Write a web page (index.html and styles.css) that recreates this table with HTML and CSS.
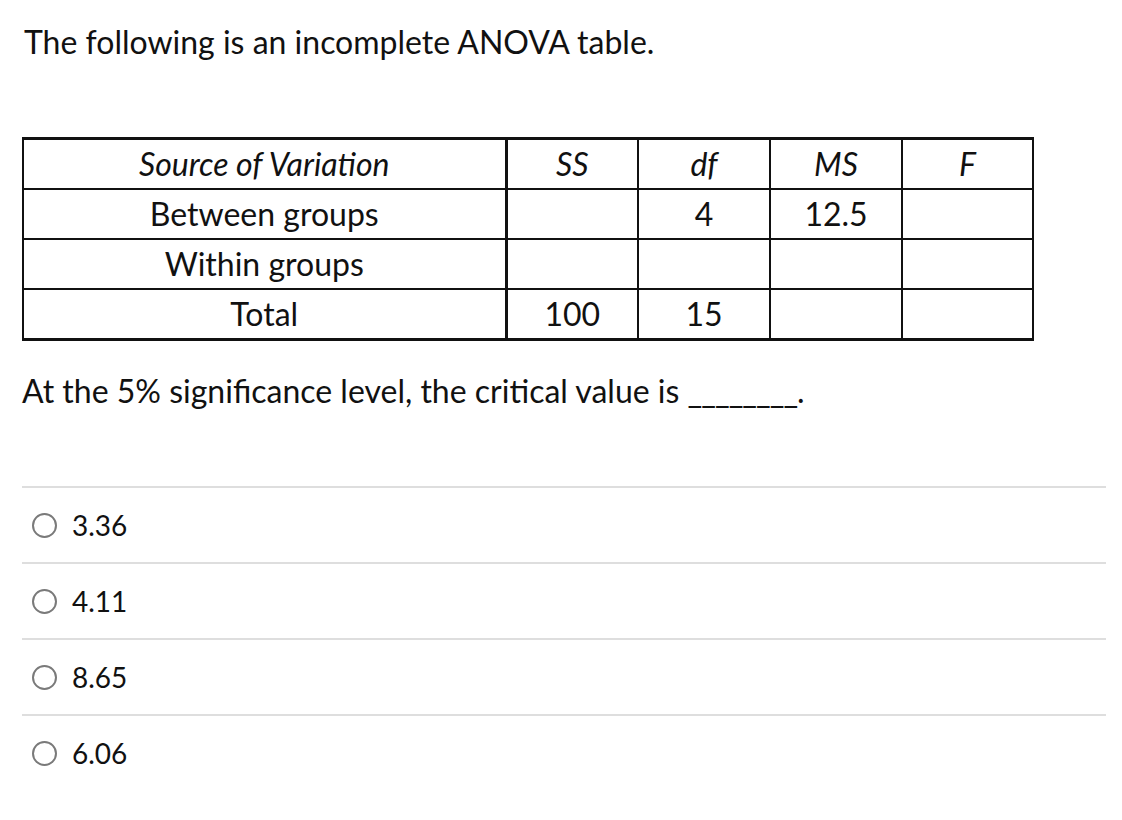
FILE: index.html
```html
<!DOCTYPE html>
<html>
<head>
<meta charset="utf-8">
<link rel="stylesheet" href="styles.css">
</head>
<body>
<div class="page">
  <p class="title">The following is an incomplete ANOVA table.</p>
  <table class="anova">
    <colgroup>
      <col class="c-src">
      <col class="c-num">
      <col class="c-num">
      <col class="c-num">
      <col class="c-last">
    </colgroup>
    <tr class="head">
      <td class="src"><i>Source of Variation</i></td>
      <td class="ss"><i>SS</i></td>
      <td><i>df</i></td>
      <td><i>MS</i></td>
      <td><i>F</i></td>
    </tr>
    <tr>
      <td class="src">Between groups</td>
      <td class="ss"></td>
      <td>4</td>
      <td>12.5</td>
      <td></td>
    </tr>
    <tr>
      <td class="src">Within groups</td>
      <td class="ss"></td>
      <td></td>
      <td></td>
      <td></td>
    </tr>
    <tr>
      <td class="src">Total</td>
      <td class="ss">100</td>
      <td>15</td>
      <td></td>
      <td></td>
    </tr>
  </table>
  <p class="question">At the 5% significance level, the critical value is <span class="blank">________</span>.</p>
  <div class="options">
    <div class="option"><span class="radio"></span><span class="label">3.36</span></div>
    <div class="option"><span class="radio"></span><span class="label">4.11</span></div>
    <div class="option"><span class="radio"></span><span class="label">8.65</span></div>
    <div class="option"><span class="radio"></span><span class="label">6.06</span></div>
  </div>
</div>
</body>
</html>
```

FILE: styles.css
```css
html, body {
  margin: 0;
  padding: 0;
  background: #fff;
}
body {
  font-family: Lato, "Liberation Sans", sans-serif;
  color: #111;
}
.page {
  padding: 20px 16px 0 22px;
}
.title {
  margin: 0 0 0 2px;
  font-size: 32px;
  line-height: 44px;
}
.anova {
  margin-top: 73px;
  border-collapse: collapse;
  table-layout: fixed;
  width: 1010px;
  border-top: 3px solid #111;
  border-bottom: 3px solid #111;
  border-left: 2px solid #111;
  border-right: 2px solid #111;
}
.c-src {
  width: 483px;
}
.c-num {
  width: 132px;
}
.c-last {
  width: 131px;
}
.anova td {
  border: 2px solid #111;
  text-align: center;
  font-size: 32px;
  height: 48px;
  padding: 0;
  line-height: 1;
}
.anova td.src {
  border-right: 3px solid #111;
}
.question {
  margin: 28px 0 0 0;
  font-size: 32px;
  line-height: 44px;
}
.blank {
  letter-spacing: -1px;
}
.options {
  margin-top: 73px;
  width: 1084px;
}
.option {
  display: flex;
  align-items: center;
  height: 74px;
  border-top: 2px solid #dedede;
}
.radio {
  width: 25px;
  height: 25px;
  border: 2px solid #7a7a7a;
  border-radius: 50%;
  margin-left: 10px;
  margin-right: 15px;
  box-sizing: border-box;
}
.label {
  font-size: 28px;
}
```
